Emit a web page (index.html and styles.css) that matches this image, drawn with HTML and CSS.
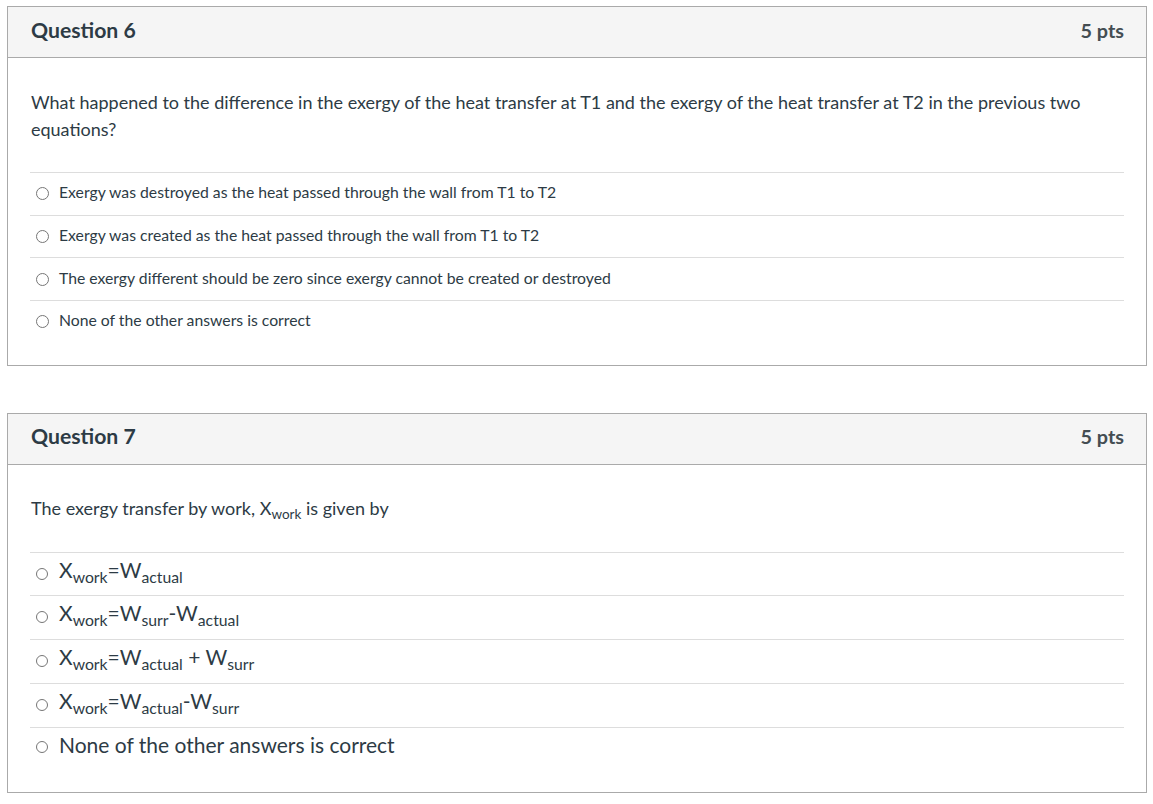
FILE: index.html
```html
<!DOCTYPE html>
<html>
<head>
<meta charset="utf-8">
<link rel="stylesheet" href="styles.css">
</head>
<body>
<div class="page">
  <div class="question">
    <div class="header">
      <div class="title">Question 6</div>
      <div class="pts">5 pts</div>
    </div>
    <div class="body">
      <div class="qtext">What happened to the difference in the exergy of the heat transfer at T1 and the exergy of the heat transfer at T2 in the previous two equations?</div>
      <div class="answers">
        <div class="answer"><span class="radio"></span><span class="label">Exergy was destroyed as the heat passed through the wall from T1 to T2</span></div>
        <div class="answer"><span class="radio"></span><span class="label">Exergy was created as the heat passed through the wall from T1 to T2</span></div>
        <div class="answer"><span class="radio"></span><span class="label">The exergy different should be zero since exergy cannot be created or destroyed</span></div>
        <div class="answer"><span class="radio"></span><span class="label">None of the other answers is correct</span></div>
      </div>
    </div>
  </div>

  <div class="question q7">
    <div class="header">
      <div class="title">Question 7</div>
      <div class="pts">5 pts</div>
    </div>
    <div class="body">
      <div class="qtext">The exergy transfer by work, X<sub>work</sub> is given by</div>
      <div class="answers big">
        <div class="answer"><span class="radio"></span><span class="label">X<sub>work</sub>=W<sub>actual</sub></span></div>
        <div class="answer"><span class="radio"></span><span class="label">X<sub>work</sub>=W<sub>surr</sub>-W<sub>actual</sub></span></div>
        <div class="answer"><span class="radio"></span><span class="label">X<sub>work</sub>=W<sub>actual</sub> + W<sub>surr</sub></span></div>
        <div class="answer"><span class="radio"></span><span class="label">X<sub>work</sub>=W<sub>actual</sub>-W<sub>surr</sub></span></div>
        <div class="answer plain"><span class="radio"></span><span class="label">None of the other answers is correct</span></div>
      </div>
    </div>
  </div>
</div>
</body>
</html>
```

FILE: styles.css
```css
html, body {
  margin: 0;
  padding: 0;
  background: #fff;
}
body {
  font-family: Lato, "Liberation Sans", sans-serif;
  color: #2d3b45;
}
.page {
  padding: 6px 6px 0 7px;
  display: flex;
  flex-direction: column;
  gap: 47px;
}
.question {
  border: 1px solid #aaaaaa;
  background: #fff;
}
.header {
  height: 51px;
  box-sizing: border-box;
  background: #f5f5f5;
  border-bottom: 1px solid #aaaaaa;
  display: flex;
  align-items: center;
  justify-content: space-between;
  padding: 0 22px 5px 23px;
}
.title {
  font-size: 21.2px;
  font-weight: 700;
  color: #2d3b45;
}
.pts {
  font-size: 19.8px;
  font-weight: 700;
  color: #444d52;
}
.body {
  padding: 30.5px 22px 22px 22px;
}
.qtext {
  font-size: 18px;
  line-height: 27px;
  padding-left: 1px;
  margin-bottom: 29.5px;
}
.answers {
  display: flex;
  flex-direction: column;
}
.answer {
  border-top: 1px solid #dddddd;
  height: 42.67px;
  box-sizing: border-box;
  display: flex;
  align-items: center;
  padding: 0 0 4px 6px;
  font-size: 15.75px;
}
.radio {
  width: 11px;
  height: 11px;
  border: 1px solid #767676;
  border-radius: 50%;
  flex: none;
  margin-right: 10px;
  margin-top: 4px;
}
.big .answer {
  height: 43.75px;
  font-size: 21px;
  padding-bottom: 10px;
}
.big .radio {
  width: 10px;
  height: 10px;
  margin-right: 11px;
  margin-top: 9px;
}
.big .plain .radio {
  margin-top: 6px;
}
sub {
  font-size: 75%;
  vertical-align: -0.3em;
  line-height: 0;
}
```
